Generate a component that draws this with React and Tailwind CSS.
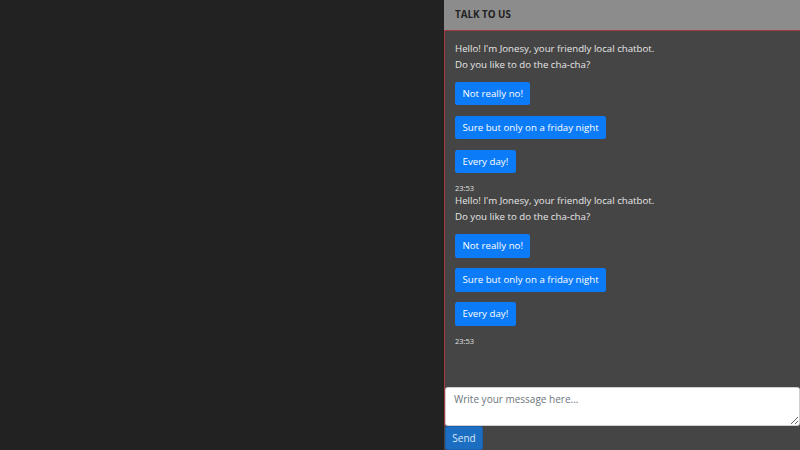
const options = ["Not really no!", "Sure but only on a friday night", "Every day!"];

const Message = () => {
  return (
    <div className="flex flex-col items-start">
      <p className="text-[9.7px] leading-[16px] text-[#e6e6e6]">
        Hello! I'm Jonesy, your friendly local chatbot.
        <br />
        Do you like to do the cha-cha?
      </p>
      <div className="mt-[9px] flex flex-col items-start gap-[10.5px]">
        {options.map((opt) => (
          <button
            key={opt}
            className="h-[23.5px] rounded-[2.5px] bg-[#0b7bf7] px-[7.5px] text-[9.7px] leading-[15px] text-white"
          >
            {opt}
          </button>
        ))}
      </div>
      <span className="mt-[10px] text-[7.5px] leading-[10px] text-[#e0e0e0]">23:53</span>
    </div>
  );
};

export default function App() {
  return (
    <div
      className="flex h-[450px] w-[800px] overflow-hidden bg-[#222222]"
      style={{ fontFamily: '"Segoe UI", "Open Sans", "Noto Sans", sans-serif' }}
    >
      <div className="flex-1" />
      <div className="flex w-[356px] flex-col bg-[#454545]">
        <div className="flex h-[30px] shrink-0 items-center bg-[#8c8c8c] px-[11px]">
          <span className="text-[9.8px] font-bold text-[#222]">TALK TO US</span>
        </div>
        <div className="flex h-[396px] shrink-0 flex-col border-l border-t border-[#a13a3e]">
          <div className="flex-1 overflow-hidden px-[10px] pt-[9.5px]">
            <Message />
            <Message />
          </div>
          <textarea
            placeholder="Write your message here..."
            className="block h-[39px] w-full shrink-0 resize-y rounded-[2.5px] border border-[#cfcfcf] bg-white px-[8px] py-[4px] text-[10px] leading-[15px] text-[#333] placeholder:text-[#6c757d]"
          />
        </div>
        <div className="flex shrink-0 pl-px">
          <button className="h-[24px] w-[38px] rounded-[2.5px] border border-[#1861ac] bg-[#1b6ec2] text-[10px] text-[#dce8f6]">
            Send
          </button>
        </div>
      </div>
    </div>
  );
}
